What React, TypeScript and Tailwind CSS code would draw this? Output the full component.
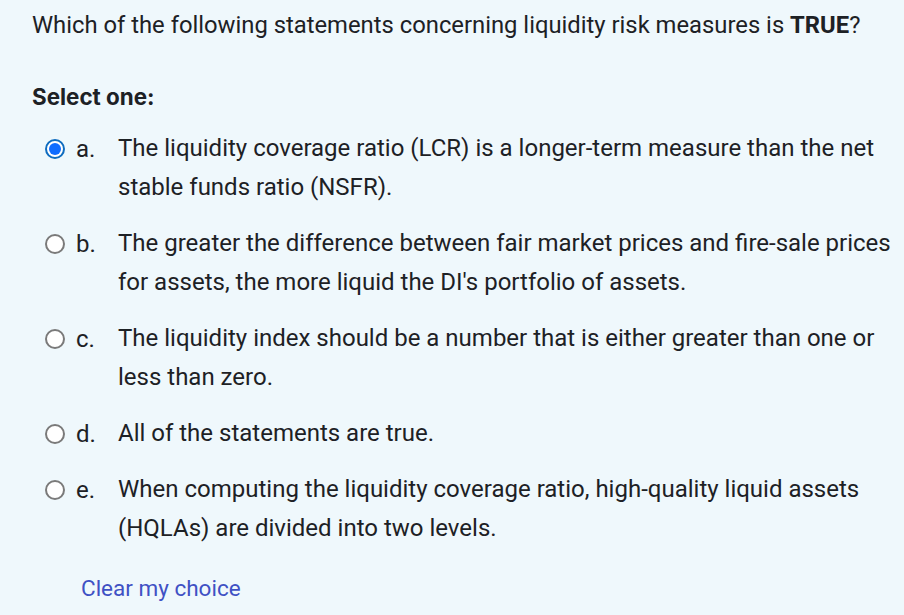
const options = [
  {
    letter: "a.",
    text: "The liquidity coverage ratio (LCR) is a longer-term measure than the net stable funds ratio (NSFR).",
    checked: true,
  },
  {
    letter: "b.",
    text: "The greater the difference between fair market prices and fire-sale prices for assets, the more liquid the DI's portfolio of assets.",
  },
  {
    letter: "c.",
    text: "The liquidity index should be a number that is either greater than one or less than zero.",
  },
  { letter: "d.", text: "All of the statements are true." },
  {
    letter: "e.",
    text: "When computing the liquidity coverage ratio, high-quality liquid assets (HQLAs) are divided into two levels.",
  },
];

function Radio({ checked }: { checked?: boolean }) {
  if (checked) {
    return (
      <span className="flex h-[20px] w-[20px] items-center justify-center rounded-full border-[2px] border-[#0f6cbf] bg-white">
        <span className="h-[12px] w-[12px] rounded-full bg-[#0f6cff]" />
      </span>
    );
  }
  return <span className="block h-[20px] w-[20px] rounded-full border-[2px] border-[#7a7a7a] bg-white" />;
}

export default function App() {
  return (
    <div className="min-h-[615px] w-full bg-[#eff8fc] font-['Roboto',sans-serif] text-[#1d2125]">
      <div className="pl-[32px] pr-2 pt-[8px]">
        <p className="text-[23.8px] leading-[34px] whitespace-nowrap">
          Which of the following statements concerning liquidity risk measures is <b>TRUE</b>?
        </p>
        <p className="mt-[38px] font-['Inter',sans-serif] text-[22.4px] font-bold leading-[34px]">Select one:</p>
        <div className="mt-[15px] flex flex-col gap-[17px]">
          {options.map((o) => (
            <div key={o.letter} className="flex">
              <div className="flex h-[39px] w-[86px] shrink-0 items-center">
                <div className="ml-[13px]">
                  <Radio checked={o.checked} />
                </div>
                <span className="ml-[11px] text-[24px]">{o.letter}</span>
              </div>
              <p className="max-w-[775px] text-[24px] leading-[39px]">{o.text}</p>
            </div>
          ))}
        </div>
        <p className="mt-[23px] pl-[49px] text-[22.5px] leading-[34px] text-[#3f51c4]">Clear my choice</p>
      </div>
    </div>
  );
}
